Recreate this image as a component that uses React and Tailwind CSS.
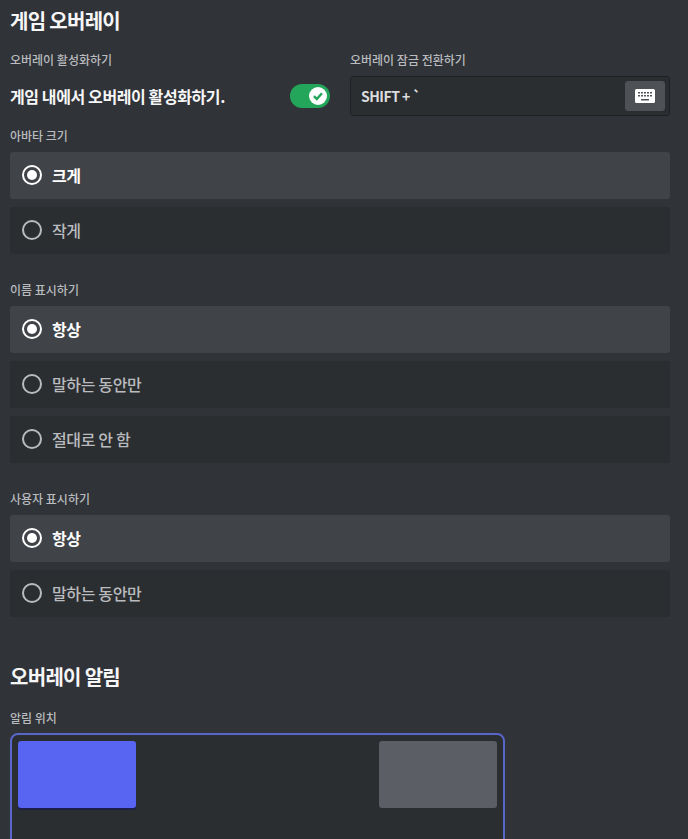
import React from 'react';

const FONT = 'font-["Noto_Sans_CJK_KR","Noto_Sans",sans-serif]';

const Label = ({ children }) => (
  <div className="h-4 text-xs leading-4 font-medium text-[#b9bbbe]">{children}</div>
);

const RadioRow = ({ label, selected }) => (
  <div className={`flex h-[47px] items-center gap-[10px] rounded-[3px] pb-0.5 pl-3 ${selected ? 'bg-[#404347] font-semibold text-white' : 'bg-[#2b2e30] font-medium text-[#b9bbbe]'}`}>
    <svg width="20" height="20" viewBox="0 0 20 20" fill="none">
      <circle cx="10" cy="10" r="9" stroke={selected ? '#ffffff' : '#b9bbbe'} strokeWidth="2" />
      {selected && <circle cx="10" cy="10" r="5" fill="#ffffff" />}
    </svg>
    <span className="text-base leading-5 tracking-[-0.35px]">{label}</span>
  </div>
);

const RadioGroup = ({ label, options, className }) => (
  <div className={className}>
    <Label>{label}</Label>
    <div className="mt-2 flex flex-col gap-2">
      {options.map((o, i) => <RadioRow key={o} label={o} selected={i === 0} />)}
    </div>
  </div>
);

const Toggle = () => (
  <div className="flex h-6 w-10 items-center justify-end rounded-full bg-[#23a55a] pr-[3px]">
    <div className="flex h-[18px] w-[18px] items-center justify-center rounded-full bg-white">
      <svg width="14" height="14" viewBox="0 0 14 14" fill="none">
        <path d="M3 7.2 5.8 10 11 4.2" stroke="#23a55a" strokeWidth="2.4" />
      </svg>
    </div>
  </div>
);

const KeyboardIcon = () => (
  <svg width="20" height="14" viewBox="0 0 20 14">
    <path fillRule="evenodd" fill="#ffffff" d="M1.5 0h17A1.5 1.5 0 0 1 20 1.5v11a1.5 1.5 0 0 1-1.5 1.5h-17A1.5 1.5 0 0 1 0 12.5v-11A1.5 1.5 0 0 1 1.5 0ZM3 3v1.5h2V3H3Zm3 0v1.5h2V3H6Zm3 0v1.5h2V3H9Zm3 0v1.5h2V3h-2Zm3 0v1.5h2V3h-2ZM3 6v1.5h2V6H3Zm3 0v1.5h2V6H6Zm3 0v1.5h2V6H9Zm3 0v1.5h2V6h-2Zm3 0v1.5h2V6h-2ZM6 10v1.5h8V10H6Z" />
  </svg>
);

export default function App() {
  return (
    <div className={`h-[839px] w-[688px] overflow-hidden bg-[#303338] pr-[18px] pl-[10px] ${FONT}`}>
      <h2 className="pt-[7px] text-xl leading-7 font-semibold tracking-[-0.7px] text-[#f6f6f7]">게임 오버레이</h2>

      <div className="mt-[17px] flex gap-5">
        <div className="w-[320px]">
          <Label>오버레이 활성화하기</Label>
          <div className="mt-2 flex h-10 items-center justify-between">
            <span className="text-base font-semibold tracking-[-0.4px] text-[#f6f6f7]">게임 내에서 오버레이 활성화하기.</span>
            <Toggle />
          </div>
        </div>
        <div className="w-[320px]">
          <Label>오버레이 잠금 전환하기</Label>
          <div className="mt-2 flex h-10 items-center justify-between rounded-[3px] border border-[#1f2225] bg-[#2b2e30] pr-1 pl-[10px]">
            <span className="text-sm font-semibold tracking-[-0.5px] text-[#dcddde]">SHIFT + `</span>
            <div className="flex h-[30px] w-10 items-center justify-center rounded-[3px] bg-[#4e5156]">
              <KeyboardIcon />
            </div>
          </div>
        </div>
      </div>

      <RadioGroup className="mt-3" label="아바타 크기" options={['크게', '작게']} />
      <RadioGroup className="mt-[28px]" label="이름 표시하기" options={['항상', '말하는 동안만', '절대로 안 함']} />
      <RadioGroup className="mt-[28px]" label="사용자 표시하기" options={['항상', '말하는 동안만']} />

      <h2 className="mt-[46px] text-xl leading-7 font-semibold tracking-[-0.7px] text-[#f6f6f7]">오버레이 알림</h2>
      <div className="mt-[19px]">
        <Label>알림 위치</Label>
        <div className="mt-[7px] flex h-[200px] w-[495px] items-start justify-between rounded-[8px] border-2 border-[#5865c9] bg-[#2b2e30] p-[6px]">
          <div className="h-[67px] w-[118px] rounded-[3px] bg-[#5865f2] shadow-[0_2px_0_#1e1f4a]" />
          <div className="h-[67px] w-[118px] rounded-[3px] bg-[#5c5e66]" />
        </div>
      </div>
    </div>
  );
}
